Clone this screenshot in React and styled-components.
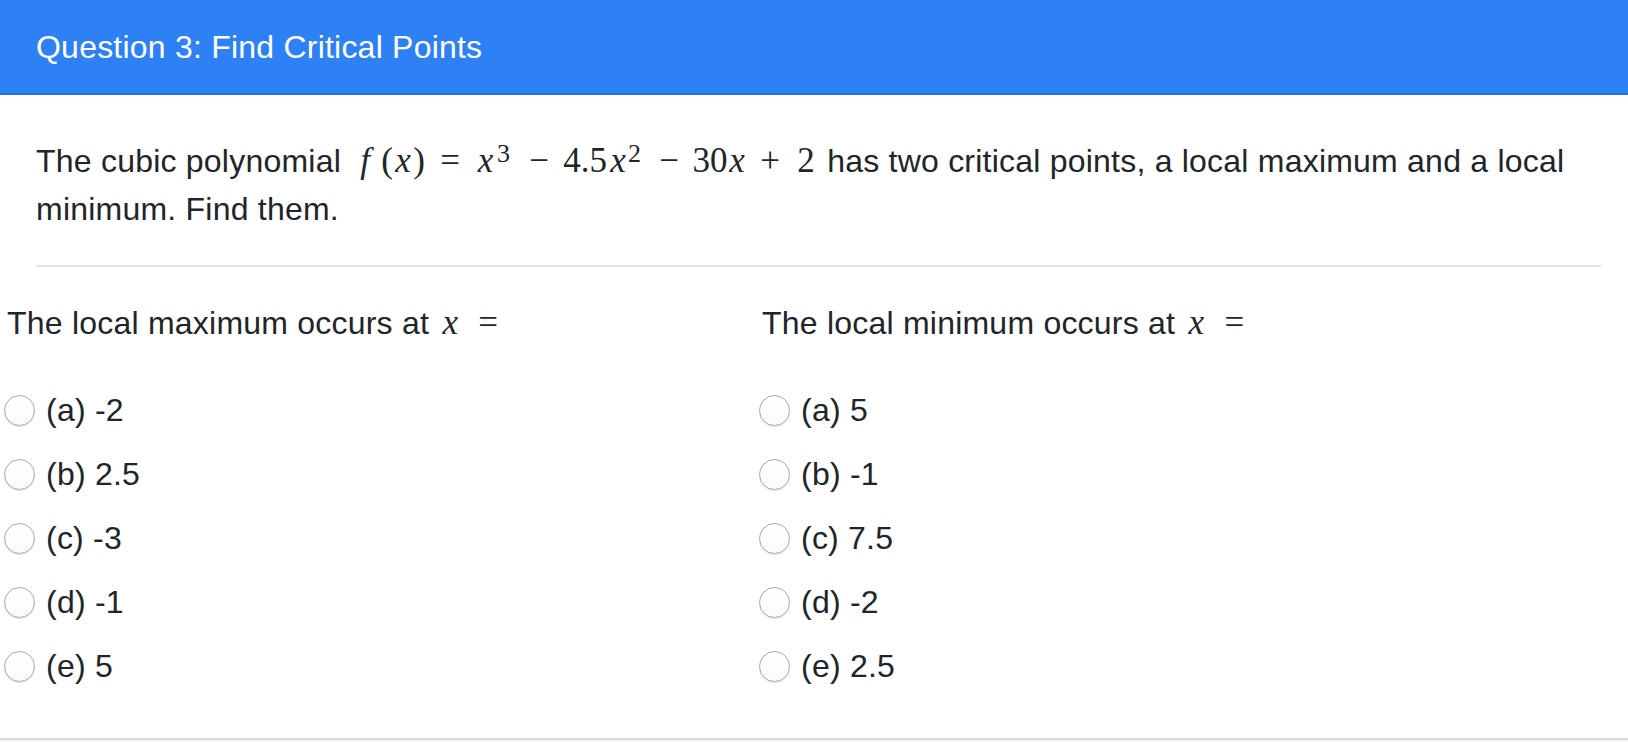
import React from "react";
import styled, { createGlobalStyle } from "styled-components";

const GlobalStyle = createGlobalStyle`
  html, body {
    margin: 0;
    padding: 0;
    background: #f2f2f2;
  }
  body {
    font-family: "Liberation Sans", Arial, sans-serif;
    letter-spacing: 0.22px;
    color: #212529;
  }
`;

const Card = styled.div`
  background: #fff;
  border-bottom: 2px solid #dadada;
`;

const Header = styled.div`
  background: #2e80f5;
  border-bottom: 2px solid #2a6fd8;
  color: #fff;
  font-size: 32px;
  line-height: 48px;
  padding: 23px 36px 22px;
`;

const QuestionBody = styled.div`
  padding: 42px 27px 0 36px;
`;

const Prompt = styled.p`
  margin: 0 0 32px;
  font-size: 32px;
  line-height: 48px;
`;

const Rule = styled.hr`
  height: 2px;
  border: 0;
  background: #e4e4e4;
  margin: 0 0 32px;
`;

const Answers = styled.div`
  display: grid;
  grid-template-columns: 755px 1fr;
  padding: 0 0 48px 4px;
`;

const Column = styled.div`
  display: flex;
  flex-direction: column;
`;

const PartLabel = styled.div`
  font-size: 32px;
  line-height: 48px;
  padding-left: 3px;
  margin-bottom: 39px;
`;

const Choices = styled.div`
  display: flex;
  flex-direction: column;
  gap: 16px;
`;

const Choice = styled.label`
  display: flex;
  align-items: center;
  gap: 11px;
  font-size: 32px;
  line-height: 48px;
`;

const Radio = styled.input`
  appearance: none;
  -webkit-appearance: none;
  width: 31px;
  height: 31px;
  margin: 0;
  border-radius: 50%;
  border: 1px solid #a9a9a9;
  background: linear-gradient(#ffffff, #fbfbfb);
  box-shadow: 0 1px 1px rgba(0, 0, 0, 0.12);
  flex: none;
`;

// math set in a serif, each token boxed to the width it takes in the original typesetting
const MathRun = styled.span`
  white-space: nowrap;
  letter-spacing: 0;
  font-family: "Liberation Serif", "Times New Roman", serif;
`;

const Tok = styled.span`
  display: inline-block;
  width: ${(p) => p.$w}px;
  text-align: center;
  font-size: 35px;
  line-height: 1;
  font-style: ${(p) => (p.$it ? "italic" : "normal")};
`;

const Sup = styled.span`
  display: inline-block;
  width: ${(p) => p.$w}px;
  text-align: left;
  font-size: 26px;
  line-height: 1;
  position: relative;
  top: -10px;
`;

const Polynomial = () => (
  <MathRun>
    <Tok $w={30} $it>f</Tok>
    <Tok $w={14}>(</Tok>
    <Tok $w={18} $it>x</Tok>
    <Tok $w={14}>)</Tok>
    <Tok $w={48}>=</Tok>
    <Tok $w={23} $it>x</Tok>
    <Sup $w={19}>3</Sup>
    <Tok $w={46}>−</Tok>
    <Tok $w={46}>4.5</Tok>
    <Tok $w={20} $it>x</Tok>
    <Sup $w={18}>2</Sup>
    <Tok $w={46}>−</Tok>
    <Tok $w={36}>30</Tok>
    <Tok $w={18} $it>x</Tok>
    <Tok $w={48}>+</Tok>
    <Tok $w={24}>2</Tok>
  </MathRun>
);

const XEquals = () => (
  <MathRun>
    <Tok $w={24} $it>x</Tok>
    <Tok $w={52}>=</Tok>
  </MathRun>
);

const maxChoices = ["(a) -2", "(b) 2.5", "(c) -3", "(d) -1", "(e) 5"];
const minChoices = ["(a) 5", "(b) -1", "(c) 7.5", "(d) -2", "(e) 2.5"];

const Part = ({ kind, name, choices }) => (
  <Column>
    <PartLabel>
      The local {kind} occurs at <XEquals />
    </PartLabel>
    <Choices>
      {choices.map((c) => (
        <Choice key={c}>
          <Radio type="radio" name={name} />
          <span>{c}</span>
        </Choice>
      ))}
    </Choices>
  </Column>
);

export default function App() {
  return (
    <>
      <GlobalStyle />
      <Card>
        <Header>Question 3: Find Critical Points</Header>
        <QuestionBody>
          <Prompt>
            The cubic polynomial <Polynomial /> has two critical points, a local
            maximum and a local minimum. Find them.
          </Prompt>
          <Rule />
        </QuestionBody>
        <Answers>
          <Part kind="maximum" name="max" choices={maxChoices} />
          <Part kind="minimum" name="min" choices={minChoices} />
        </Answers>
      </Card>
    </>
  );
}
